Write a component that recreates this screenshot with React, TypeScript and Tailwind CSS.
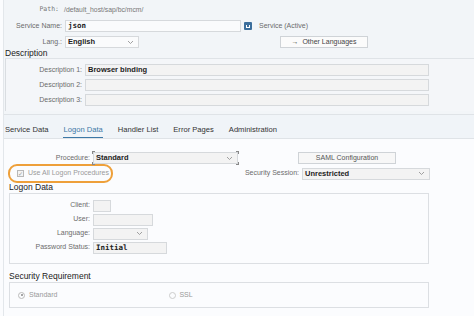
import React from 'react';

const inputCls = 'h-[12px] border border-[#d6d9dc] bg-[#f3f3f3] px-[2px] flex items-center text-[7.5px] font-semibold text-[#222] whitespace-nowrap';

function Row({ label, labelW, children, className = '' }: { label: string; labelW: string; children?: React.ReactNode; className?: string }) {
  return (
    <div className={`flex items-center ${className}`}>
      <div className={`${labelW} shrink-0 text-right pr-[3px] text-[7px] text-[#6b6b6b] whitespace-nowrap`}>{label}</div>
      {children}
    </div>
  );
}

function Chevron() {
  return (
    <svg width="7" height="5" viewBox="0 0 7 5" className="ml-auto mr-[2px]">
      <path d="M1 1 L3.5 3.5 L6 1" stroke="#8a8a8a" strokeWidth="0.8" fill="none" />
    </svg>
  );
}

const mono = { fontFamily: '"DejaVu Sans Mono", "Liberation Mono", monospace' };

export default function App() {
  return (
    <div className="w-[474px] h-[316px] overflow-hidden bg-[#fbfcfe] text-[#333]" style={{ fontFamily: '"Liberation Sans", Arial, sans-serif' }}>
      <div className="border-l border-[#e3e7eb] ml-[3px] h-full">
        {/* header */}
        <div className="bg-[#f2f5f8] pt-[5px] h-[58px] relative">
          <div className="flex items-center h-[10px]">
            <div className="w-[60px] text-right pr-[5px] text-[6.5px] text-[#777]" style={mono}>Path:</div>
            <div className="text-[6.8px] text-[#777]">/default_host/sap/bc/mcm/</div>
          </div>
          <div className="flex items-center mt-[5px]">
            <Row label="Service Name:" labelW="w-[61px]">
              <div className={`${inputCls} w-[176px] bg-[#fafbfc] font-bold`} style={mono}>json</div>
            </Row>
            <div className="ml-[3px] w-[8px] h-[8px] bg-[#3c6e9c] rounded-[1px] flex items-center justify-center">
              <div className="w-[4px] h-[3px] border-b border-l border-r border-white" />
            </div>
            <div className="ml-[7px] text-[7px] text-[#6b6b6b]">Service (Active)</div>
          </div>
          <div className="flex items-center mt-[4px]">
            <Row label="Lang.:" labelW="w-[61px]">
              <div className={`${inputCls} w-[74px] bg-[#fafbfc]`}>English<Chevron /></div>
            </Row>
            <div className="ml-[141px] w-[88px] h-[12px] border border-[#cfd3d7] bg-[#fbfbfb] flex items-center justify-center text-[7px] text-[#444]">→&nbsp;&nbsp;Other Languages</div>
          </div>
          <div className="absolute bottom-[1px] left-[1px] text-[8.5px] leading-none text-[#222]">Description</div>
        </div>
        {/* Description */}
        <div className="bg-[#f2f5f8] h-[56px]">
          <div className="border-t border-[#dfe3e7] ml-[1px] h-full">
            <div className="border-l border-[#d9dde1] h-[52px] bg-[#f4f6f9] pt-[5px] flex flex-col gap-[3px]">
              <Row label="Description 1:" labelW="w-[79px]">
                <div className={`${inputCls} w-[344px] font-semibold`}>Browser binding</div>
              </Row>
              <Row label="Description 2:" labelW="w-[79px]">
                <div className={`${inputCls} w-[344px]`} />
              </Row>
              <Row label="Description 3:" labelW="w-[79px]">
                <div className={`${inputCls} w-[344px]`} />
              </Row>
            </div>
          </div>
        </div>
        {/* tabs */}
        <div className="bg-[#f0f4f8] border-t border-[#dfe3e7] border-b h-[25px] flex items-end gap-[15px] pl-[1px] text-[7.6px] text-[#333] whitespace-nowrap">
          <div className="pb-[3px]">Service Data</div>
          <div className="pb-[1.5px] text-[#3d78a6] border-b-[1.5px] border-[#3d78a6]">Logon Data</div>
          <div className="pb-[3px]">Handler List</div>
          <div className="pb-[3px]">Error Pages</div>
          <div className="pb-[3px]">Administration</div>
        </div>
        {/* content */}
        <div className="pt-[13px]">
          <div className="flex items-center">
            <Row label="Procedure:" labelW="w-[89px]">
              <div className={`${inputCls} w-[145px] bg-[#f3f3f3] relative`}>
                Standard<Chevron />
                <div className="absolute -left-[2px] -top-[2px] w-[3px] h-[3px] border-l border-t border-[#888]" />
                <div className="absolute -right-[2px] -top-[2px] w-[3px] h-[3px] border-r border-t border-[#888]" />
                <div className="absolute -left-[2px] -bottom-[2px] w-[3px] h-[3px] border-l border-b border-[#888]" />
                <div className="absolute -right-[2px] -bottom-[2px] w-[3px] h-[3px] border-r border-b border-[#888]" />
              </div>
            </Row>
            <div className="ml-[60px] w-[98px] h-[12px] border border-[#cfd3d7] bg-[#f7f7f7] flex items-center justify-center text-[7px] text-[#555]">SAML Configuration</div>
          </div>
          <div className="flex items-center mt-[0px]">
            <div className="ml-[4px] w-[105px] h-[19px] border-2 border-[#eea03a] rounded-[9px] flex items-center pl-[7px] whitespace-nowrap">
              <div className="w-[7px] h-[7px] border border-[#b8b8b8] bg-[#f3f3f3] flex items-center justify-center text-[6px] leading-none text-[#999]">✓</div>
              <div className="ml-[4px] text-[7px] text-[#9a9a9a]">Use All Logon Procedures</div>
            </div>
            <Row label="Security Session:" labelW="w-[189px]">
              <div className={`${inputCls} w-[128px]`}>Unrestricted<Chevron /></div>
            </Row>
          </div>
          <div className="ml-[5px] text-[8.5px] text-[#222] leading-none">Logon Data</div>
          <div className="ml-[5px] mt-[1px] w-[420px] h-[71px] border border-[#dcdfe3] pt-[6px] flex flex-col gap-[2px]">
            <Row label="Client:" labelW="w-[83px]"><div className={`${inputCls} w-[18px]`} /></Row>
            <Row label="User:" labelW="w-[83px]"><div className={`${inputCls} w-[60px]`} /></Row>
            <Row label="Language:" labelW="w-[83px]"><div className={`${inputCls} w-[55px]`}><Chevron /></div></Row>
            <Row label="Password Status:" labelW="w-[83px]">
              <div className={`${inputCls} w-[74px] font-bold`} style={mono}>Initial</div>
            </Row>
          </div>
          <div className="ml-[5px] mt-[8px] text-[8.5px] text-[#222] leading-none">Security Requirement</div>
          <div className="ml-[5px] mt-[2px] w-[420px] h-[26px] border border-[#dcdfe3] flex items-center">
            <div className="ml-[8px] w-[7px] h-[7px] rounded-full border border-[#bbb] flex items-center justify-center">
              <div className="w-[2px] h-[2px] rounded-full bg-[#888]" />
            </div>
            <div className="ml-[4px] text-[7px] text-[#999]">Standard</div>
            <div className="ml-[112px] w-[7px] h-[7px] rounded-full border border-[#ccc]" />
            <div className="ml-[3px] text-[7px] text-[#999]">SSL</div>
          </div>
        </div>
      </div>
    </div>
  );
}
